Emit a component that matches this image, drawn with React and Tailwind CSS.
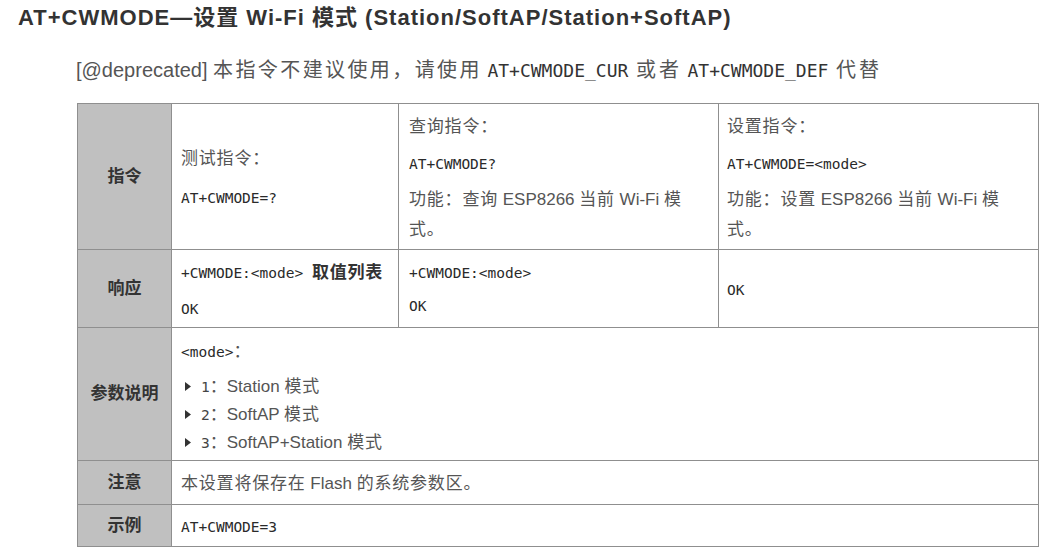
import React from "react";

const sans = "font-['Liberation_Sans','Noto_Sans_CJK_SC',sans-serif]";
const mono = "font-['DejaVu_Sans_Mono','Noto_Sans_CJK_SC',monospace]";
const cell = "border border-[#8f8f8f] px-0";
const head = "border border-[#8f8f8f] bg-[#c0c0c0] text-center align-middle font-bold text-[17px] text-[#333]";

function Tri() {
  return (
    <svg width="6" height="9" viewBox="0 0 6 9" className="inline-block mr-[10px] mb-[2px]">
      <polygon points="0,0 6,4.5 0,9" fill="#333" />
    </svg>
  );
}

function Mono({ children, className = "" }) {
  return <span className={`${mono} text-[14.5px] text-[#2a2a2a] ${className}`}>{children}</span>;
}

function C({ children }) {
  return <span className="tracking-[0.8px]">{children}</span>;
}

export default function App() {
  return (
    <div className={`${sans} w-[1054px] h-[556px] bg-white text-[#555] overflow-hidden`}>
      <div className="pl-[18px] pt-[4px] text-[22px] leading-[28px] font-bold tracking-[1px] text-[#333] whitespace-nowrap">
        AT+CWMODE—设置 Wi-Fi 模式 (Station/SoftAP/Station+SoftAP)
      </div>
      <div className="ml-[76px] mt-[24px] text-[20px] leading-[28px] text-[#555] whitespace-nowrap">
        [@deprecated] <span className="tracking-[2.4px]">本指令不建议使用，请使用</span> <span className={`${mono} text-[18px] text-[#333]`}>AT+CWMODE_CUR</span> <span className="tracking-[3px] ml-[2px]">或者</span> <span className={`${mono} text-[18px] text-[#333]`}>AT+CWMODE_DEF</span> <span className="tracking-[3px] ml-[2px]">代替</span>
      </div>
      <table className="ml-[77px] mt-[18px] border-collapse table-fixed w-[961px] text-[17px]">
        <colgroup>
          <col className="w-[94px]" />
          <col className="w-[227px]" />
          <col className="w-[320px]" />
          <col className="w-[320px]" />
        </colgroup>
        <tbody>
          <tr className="h-[146px]">
            <td className={head}>指令</td>
            <td className={`${cell} align-top pl-[9px] pt-[40px]`}>
              <div className="leading-[30px]"><C>测试指令：</C></div>
              <div className="leading-[30px] mt-[9px]"><Mono>AT+CWMODE=?</Mono></div>
            </td>
            <td className={`${cell} align-top pl-[10px] pt-[8px]`}>
              <div className="leading-[30px]"><C>查询指令：</C></div>
              <div className="leading-[30px] mt-[7px]"><Mono>AT+CWMODE?</Mono></div>
              <div className="leading-[30px] mt-[6px] whitespace-nowrap"><C>功能：查询</C> ESP8266 <C>当前</C> Wi-Fi 模</div>
              <div className="leading-[30px]"><C>式。</C></div>
            </td>
            <td className={`${cell} align-top pl-[8px] pt-[8px]`}>
              <div className="leading-[30px]"><C>设置指令：</C></div>
              <div className="leading-[30px] mt-[7px]"><Mono>AT+CWMODE=&lt;mode&gt;</Mono></div>
              <div className="leading-[30px] mt-[6px] whitespace-nowrap"><C>功能：设置</C> ESP8266 <C>当前</C> Wi-Fi 模</div>
              <div className="leading-[30px]"><C>式。</C></div>
            </td>
          </tr>
          <tr className="h-[78px]">
            <td className={head}>响应</td>
            <td className={`${cell} align-top pl-[9px] pt-[8px]`}>
              <div className="leading-[30px] whitespace-nowrap"><Mono>+CWMODE:&lt;mode&gt;</Mono> <span className="font-bold text-[#333] ml-[4px] tracking-[0.8px]">取值列表</span></div>
              <div className="leading-[30px] mt-[6px]"><Mono>OK</Mono></div>
            </td>
            <td className={`${cell} align-top pl-[10px] pt-[8px]`}>
              <div className="leading-[30px]"><Mono>+CWMODE:&lt;mode&gt;</Mono></div>
              <div className="leading-[30px] mt-[3px]"><Mono>OK</Mono></div>
            </td>
            <td className={`${cell} pl-[8px] align-middle`}>
              <div className="leading-[30px] mt-[2px]"><Mono>OK</Mono></div>
            </td>
          </tr>
          <tr className="h-[133px]">
            <td className={head}>参数说明</td>
            <td className={`${cell} align-top pl-[9px] pt-[9px]`} colSpan={3}>
              <div className="leading-[30px]"><Mono>&lt;mode&gt;</Mono>：</div>
              <div className="mt-[6px] leading-[27px]">
                <div className="pl-[4px] whitespace-nowrap"><Tri /><Mono className="text-[#444]">1</Mono>：Station <C>模式</C></div>
                <div className="pl-[4px] whitespace-nowrap"><Tri /><Mono className="text-[#444]">2</Mono>：SoftAP <C>模式</C></div>
                <div className="pl-[4px] whitespace-nowrap"><Tri /><Mono className="text-[#444]">3</Mono>：SoftAP+Station <C>模式</C></div>
              </div>
            </td>
          </tr>
          <tr className="h-[44px]">
            <td className={head}>注意</td>
            <td className={`${cell} pl-[9px] align-middle`} colSpan={3}>
              <div className="leading-[30px] mt-[2px]"><C>本设置将保存在</C> Flash <C>的系统参数区。</C></div>
            </td>
          </tr>
          <tr className="h-[42px]">
            <td className={head}>示例</td>
            <td className={`${cell} pl-[9px] align-middle`} colSpan={3}>
              <div className="leading-[30px] mt-[2px]"><Mono>AT+CWMODE=3</Mono></div>
            </td>
          </tr>
        </tbody>
      </table>
    </div>
  );
}
